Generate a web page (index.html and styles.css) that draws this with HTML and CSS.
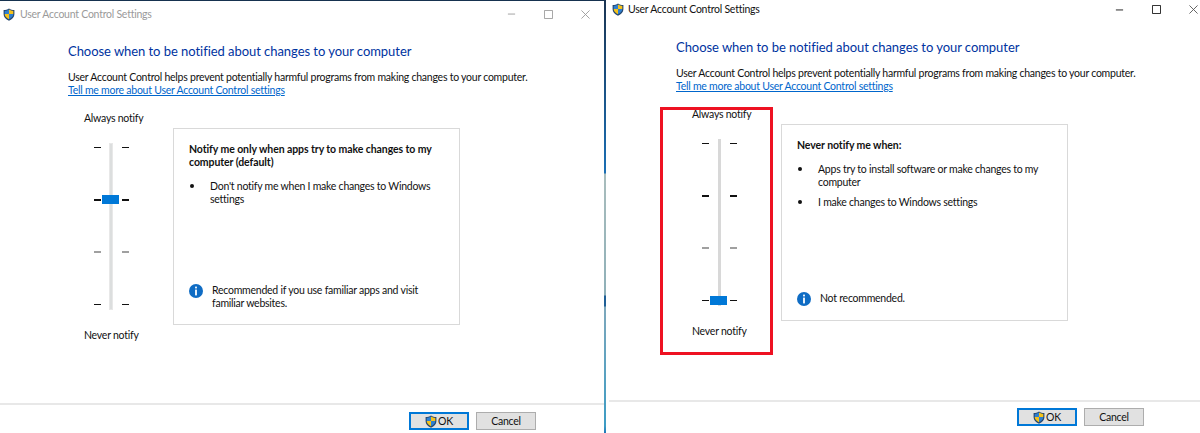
FILE: index.html
```html
<!DOCTYPE html>
<html lang="en">
<head>
<meta charset="utf-8">
<title>User Account Control Settings</title>
<link rel="stylesheet" href="styles.css">
</head>
<body>
<svg class="defs" width="0" height="0" aria-hidden="true">
  <symbol id="shield" viewBox="0 0 12 13">
    <path d="M6 .4C4.4 1.5 2.6 2 .6 2.100v4.200c0 3 2.100 5.100 5.400 6.400 3.300-1.300 5.400-3.400 5.400-6.400V2.100C9.400 2 7.600 1.500 6 .4z" fill="#26476f"/>
    <path d="M6 1.600C4.700 2.400 3.300 2.800 1.700 3v3H6z" fill="#2f7fd0"/>
    <path d="M6 1.600V6h4.300V3C8.700 2.800 7.300 2.400 6 1.600z" fill="#f5c21a"/>
    <path d="M1.700 6c.1 2.400 1.800 4 4.300 5.300V6z" fill="#f5c21a"/>
    <path d="M6 6v5.300c2.500-1.300 4.200-2.900 4.300-5.300z" fill="#2f7fd0"/>
  </symbol>
</svg>

<section class="window window-inactive">
  <header class="titlebar">
    <svg class="shield"><use href="#shield"/></svg>
    <span class="title">User Account Control Settings</span>
    <div class="controls">
      <svg class="ctl" viewBox="0 0 10 10"><path d="M1 4.500h8" fill="none" stroke="currentColor"/></svg>
      <svg class="ctl" viewBox="0 0 10 10"><path d="M.5 9.500h9v-9h-9z" fill="none" stroke="currentColor"/></svg>
      <svg class="ctl" viewBox="0 0 10 10"><path d="M.5.500l9 9M9.500.500l-9 9" fill="none" stroke="currentColor"/></svg>
    </div>
  </header>
  <main class="content">
    <h1 class="heading">Choose when to be notified about changes to your computer</h1>
    <p class="intro">User Account Control helps prevent potentially harmful programs from making changes to your computer.</p>
    <a class="link" href="#">Tell me more about User Account Control settings</a>
    <div class="panel">
      <div class="slider">
        <div class="slider-label">Always notify</div>
        <div class="track-area">
          <div class="track"></div>
          <div class="row"><i class="tick"></i><i class="gap"></i><i class="tick"></i></div>
          <div class="row"><i class="tick dark"></i><i class="thumb"></i><i class="tick dark"></i></div>
          <div class="row"><i class="tick mid"></i><i class="gap"></i><i class="tick mid"></i></div>
          <div class="row"><i class="tick"></i><i class="gap"></i><i class="tick"></i></div>
        </div>
        <div class="slider-label">Never notify</div>
      </div>
      <div class="card">
        <div class="card-body">
          <strong class="card-title">Notify me only when apps try to make changes to my computer (default)</strong>
          <ul class="list">
            <li>Don't notify me when I make changes to Windows settings</li>
          </ul>
        </div>
        <div class="note">
          <svg class="info" viewBox="0 0 14 14"><circle cx="7" cy="7" r="7" fill="#0f6cc4"/><rect x="6.100" y="2.600" width="1.800" height="1.800" fill="#fff"/><rect x="6.100" y="5.600" width="1.800" height="5.800" fill="#fff"/></svg>
          <span>Recommended if you use familiar apps and visit familiar websites.</span>
        </div>
      </div>
    </div>
  </main>
  <footer class="footer">
    <button class="btn btn-default" type="button"><svg class="shield"><use href="#shield"/></svg>OK</button>
    <button class="btn" type="button">Cancel</button>
  </footer>
</section>

<section class="window window-active">
  <header class="titlebar">
    <svg class="shield"><use href="#shield"/></svg>
    <span class="title">User Account Control Settings</span>
    <div class="controls">
      <svg class="ctl" viewBox="0 0 10 10"><path d="M1 5.500h8" fill="none" stroke="currentColor"/></svg>
      <svg class="ctl" viewBox="0 0 10 10"><path d="M.5 9.500h9v-9h-9z" fill="none" stroke="currentColor"/></svg>
      <svg class="ctl ctl-close" viewBox="0 0 10 10"><path d="M.5.500l9 9M9.500.500l-9 9" fill="none" stroke="currentColor"/></svg>
    </div>
  </header>
  <main class="content">
    <h1 class="heading">Choose when to be notified about changes to your computer</h1>
    <p class="intro">User Account Control helps prevent potentially harmful programs from making changes to your computer.</p>
    <a class="link" href="#">Tell me more about User Account Control settings</a>
    <div class="panel">
      <div class="slider">
        <div class="slider-label">Always notify</div>
        <div class="track-area">
          <div class="track"></div>
          <div class="row"><i class="tick"></i><i class="gap"></i><i class="tick"></i></div>
          <div class="row"><i class="tick dark"></i><i class="gap"></i><i class="tick dark"></i></div>
          <div class="row"><i class="tick mid"></i><i class="gap"></i><i class="tick mid"></i></div>
          <div class="row"><i class="tick"></i><i class="thumb"></i><i class="tick"></i></div>
        </div>
        <div class="slider-label">Never notify</div>
      </div>
      <div class="card">
        <div class="card-body">
          <strong class="card-title">Never notify me when:</strong>
          <ul class="list">
            <li>Apps try to install software or make changes to my computer</li>
            <li>I make changes to Windows settings</li>
          </ul>
        </div>
        <div class="note">
          <svg class="info" viewBox="0 0 14 14"><circle cx="7" cy="7" r="7" fill="#0f6cc4"/><rect x="6.100" y="2.600" width="1.800" height="1.800" fill="#fff"/><rect x="6.100" y="5.600" width="1.800" height="5.800" fill="#fff"/></svg>
          <span>Not recommended.</span>
        </div>
      </div>
    </div>
    <div class="highlight"></div>
  </main>
  <footer class="footer">
    <button class="btn btn-default" type="button"><svg class="shield"><use href="#shield"/></svg>OK</button>
    <button class="btn" type="button">Cancel</button>
  </footer>
</section>
</body>
</html>
```

FILE: styles.css
```css
* { box-sizing: border-box; }
html, body { margin: 0; height: 100%; }
body {
  display: flex;
  width: 1200px;
  height: 433px;
  overflow: hidden;
  background: #fff;
  color: #111;
  font-family: "Lato", "Noto Sans", sans-serif;
  font-size: 10.5px;
  letter-spacing: -0.24px;
  line-height: 13px;
}
.defs { position: absolute; }
.window { display: flex; flex-direction: column; height: 433px; background: #fff; }
.window-inactive {
  width: 606px;
  padding-right: 2px;
  border-top: 1px solid #16324f;
  background: #fff linear-gradient(#1b3553 0, #1a6fb5 172px, #a9bdbd 173px, #8fb0b8 294px, #1f5f96 295px, #1f5f96 305px, #7ea8bc 306px, #3d9cc4 425px, #1a70b8 433px) right top / 2px 100% no-repeat;
}
.window-active { width: 591px; margin-left: 3px; }

.titlebar { display: flex; align-items: center; flex: none; }
.window-inactive .titlebar { height: 27px; padding: 0 14px 0 3px; color: #9a9a9a; }
.window-active .titlebar { height: 18px; padding: 0 2px 0 3px; color: #111; }
.titlebar .shield { width: 12px; height: 13px; margin-right: 5px; }
.window-active .titlebar .shield { margin-right: 4px; }
.controls { display: flex; gap: 28px; margin-left: auto; }
.ctl { width: 9px; height: 9px; display: block; }
.ctl-close { color: #555; }

.content { position: relative; flex: 1; display: flex; flex-direction: column; padding-left: 67px; }
.window-inactive .content { padding-left: 68px; padding-top: 14px; }
.window-active .content { padding-top: 20px; }
.heading { margin: 0; font-size: 13px; letter-spacing: -0.05px; line-height: 19px; font-weight: 400; color: #0033a0; }
.intro { margin: 10px 0 0; }
.link { align-self: flex-start; color: #0066cc; text-decoration: underline; }
.panel { display: flex; margin-top: 14px; }
.slider { width: 105px; display: flex; flex-direction: column; padding-left: 16px; }
.slider-label { height: 14px; line-height: 14px; white-space: nowrap; }
.track-area { position: relative; display: flex; flex-direction: column; justify-content: space-between; width: 35px; height: 167px; margin: 18px 0 18px 10px; padding-bottom: 1px; }
.track { position: absolute; left: 15px; top: 0; bottom: 0; width: 4px; background: #dcdede; border: 1px solid #e8e8e8; }
.window-active .track { left: 16px; width: 3px; background: #d8d8d8; border: 0; }
.row { position: relative; display: flex; justify-content: space-between; align-items: center; height: 9px; }
.tick { width: 7px; height: 1px; background: #111; }
.tick.dark { height: 2px; }
.tick.mid { height: 2px; background: #a0a0a0; }
.gap { width: 17px; margin-right: 2px; }
.thumb { width: 17px; height: 9px; margin-right: 2px; background: #0078d7; }

.card { width: 287px; height: 197px; margin-top: 17px; border: 1px solid #d9d9d9; padding: 14px 15px 14px; display: flex; flex-direction: column; justify-content: space-between; }
.card-title { display: block; font-weight: 700; letter-spacing: -0.08px; }
.list { margin: 11px 0 0; padding: 0 0 0 21px; list-style: none; }
.list li { position: relative; margin-bottom: 7px; }
.list li::before { content: ""; position: absolute; left: -20px; top: 4px; width: 4px; height: 4px; border-radius: 50%; background: #111; }
.note { display: flex; gap: 9px; align-items: flex-start; }
.info { width: 14px; height: 14px; flex: none; }

.highlight { position: absolute; left: 51px; top: 89px; width: 113px; height: 248px; border: 3px solid #ee1122; }

.footer { flex: none; display: flex; justify-content: flex-end; gap: 7px; border-top: 2px solid #e8e8e8; }
.window-inactive .footer { height: 30px; padding: 7px 68px 0 0; }
.window-active .footer { height: 33px; padding: 6px 56px 0 0; }
.btn { display: flex; align-items: center; justify-content: center; width: 60px; height: 18px; padding: 0; background: #e1e1e1; border: 1px solid #adadad; font: inherit; letter-spacing: inherit; color: #111; }
.btn-default { border: 2px solid #0078d7; }
.btn .shield { width: 12px; height: 13px; margin-right: 1px; }
```
